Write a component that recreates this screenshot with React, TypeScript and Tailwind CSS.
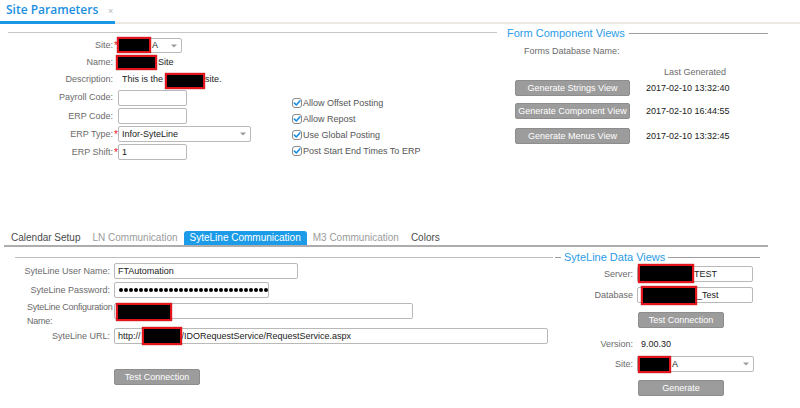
import React from 'react';

const Redact: React.FC<{ w: number; h?: number }> = ({ w, h = 16 }) => (
  <span
    className="inline-block shrink-0 bg-black border-2 border-[#e3141b] shadow-[0_0_1px_#900]"
    style={{ width: w, height: h }}
  />
);

const Arrow = () => (
  <svg width="6" height="4" viewBox="0 0 6 4" className="ml-auto mr-[4px] shrink-0">
    <path d="M0 0.5 L6 0.5 L3 3.5 Z" fill="#9a9a9a" />
  </svg>
);

const Check = () => (
  <svg width="10" height="10" viewBox="0 0 10 10" className="shrink-0">
    <rect x="0.5" y="0.5" width="9" height="9" rx="2.5" fill="#fff" stroke="#8a8a8a" />
    <path d="M2.4 5.1 L4.3 7 L7.8 2.9" fill="none" stroke="#1c8fe3" strokeWidth="1.6" strokeLinecap="round" strokeLinejoin="round" />
  </svg>
);

const Input: React.FC<{ w: number; h?: number; clip?: boolean; children?: React.ReactNode }> = ({ w, h = 16, clip = true, children }) => (
  <div
    className={`flex items-center shrink-0 border border-[#b9b9b9] rounded-[2px] bg-white text-[9px] text-[#222] pl-[3px] ${clip ? 'overflow-hidden' : ''}`}
    style={{ width: w, height: h }}
  >
    {children}
  </div>
);

const GreyButton: React.FC<{ w: number; children: React.ReactNode }> = ({ w, children }) => (
  <div
    className="h-[16px] flex items-center justify-center shrink-0 bg-[#9c9c9c] border border-[#8d8d8d] rounded-[2px] text-white text-[9px]"
    style={{ width: w }}
  >
    {children}
  </div>
);

const TopLabel: React.FC<{ req?: boolean; children: React.ReactNode }> = ({ req, children }) => (
  <div className="w-[110px] shrink-0 flex justify-end items-center text-[9px] text-[#6b6b6b]">
    <span>{children}</span>
    <span className="w-[5px] self-start text-[#e3141b] text-[10px] leading-none mt-[1px] pl-[1px]">{req ? '*' : ''}</span>
  </div>
);

const SlLabel: React.FC<{ children: React.ReactNode }> = ({ children }) => (
  <div className="ml-[8px] w-[87px] mr-[4px] shrink-0 text-right whitespace-nowrap text-[#6b6b6b]">{children}</div>
);

const checks = ['Allow Offset Posting', 'Allow Repost', 'Use Global Posting', 'Post Start End Times To ERP'];

const views = [
  { label: 'Generate Strings View', date: '2017-02-10 13:32:40', mt: 'mt-[2px]' },
  { label: 'Generate Component View', date: '2017-02-10 16:44:55', mt: 'mt-[7px]' },
  { label: 'Generate Menus View', date: '2017-02-10 13:32:45', mt: 'mt-[9px]' },
];

const tabs = [
  { name: 'Calendar Setup', state: 'on' },
  { name: 'LN Communication', state: 'off' },
  { name: 'SyteLine Communication', state: 'active' },
  { name: 'M3 Communication', state: 'off' },
  { name: 'Colors', state: 'on' },
];

export default function App() {
  return (
    <div className="w-[800px] h-[408px] bg-white overflow-hidden [font-family:'Liberation_Sans',Arial,sans-serif] leading-none">
      {/* page tab header */}
      <div className="h-[24px] flex items-start border-b-2 border-[#ece8e4]">
        <div className="w-[115px] h-[24px] -mb-[2px] border-b-[3px] border-[#1a98e6] flex items-center pl-[6px] pb-[2px]">
          <span className="[font-family:'Open_Sans',sans-serif] font-semibold text-[12px] text-[#1a8fe0]">Site Parameters</span>
        </div>
        <span className="text-[9px] text-[#b5b5b5] mt-[7px] -ml-[7px]">×</span>
      </div>

      {/* top section */}
      <div className="flex h-[206px]">
        <div className="ml-[8px] mt-[8px] w-[489px] self-start border-t border-[#c6c6c6] flex">
          <div className="w-[250px] pt-[4px]">
            <div className="h-[17px] flex items-center">
              <TopLabel req>Site:</TopLabel>
              <div className="h-[15px] w-[64px] flex items-center border border-[#b9b9b9] rounded-[2px] text-[9px] text-[#222]">
                <span className="-ml-[2px] -mt-[1px] flex"><Redact w={34} h={16} /></span>
                <span className="ml-px">A</span>
                <Arrow />
              </div>
            </div>
            <div className="h-[17px] flex items-center">
              <TopLabel>Name:</TopLabel>
              <span className="-ml-[2px] flex"><Redact w={41} h={15} /></span>
              <span className="text-[9px] text-[#222] ml-px">Site</span>
            </div>
            <div className="h-[17px] flex items-center">
              <TopLabel>Description:</TopLabel>
              <span className="text-[9px] text-[#222] ml-[4px]">This is the</span>
              <span className="ml-[2px] mt-[3px] flex"><Redact w={40} h={16} /></span>
              <span className="text-[9px] text-[#222]">site.</span>
            </div>
            <div className="h-[19px] flex items-center">
              <TopLabel>Payroll Code:</TopLabel>
              <Input w={69} />
            </div>
            <div className="h-[18px] flex items-center">
              <TopLabel>ERP Code:</TopLabel>
              <Input w={69} />
            </div>
            <div className="h-[18px] flex items-center">
              <TopLabel req>ERP Type:</TopLabel>
              <Input w={133}>
                <span>Infor-SyteLine</span>
                <Arrow />
              </Input>
            </div>
            <div className="h-[18px] flex items-center">
              <TopLabel req>ERP Shift:</TopLabel>
              <Input w={69}>1</Input>
            </div>
          </div>

          <div className="ml-[34px] mt-[62px]">
            {checks.map((c) => (
              <div key={c} className="h-[16px] flex items-center gap-[1px] text-[9px] text-[#555]">
                <Check />
                <span>{c}</span>
              </div>
            ))}
          </div>
        </div>

        <div className="ml-[10px] mt-[2px] w-[261px] self-start">
          <div className="h-[14px] flex items-center">
            <span className="text-[11px] text-[#2b9ce6]">Form Component Views</span>
            <div className="flex-1 ml-[4px] border-t border-[#9e9e9e]" />
          </div>
          <div className="mt-[5px] pl-[17px] h-[12px] flex items-center text-[9px] text-[#6b6b6b]">Forms Database Name:</div>
          <div className="mt-[9px] pl-[157px] h-[12px] flex items-center text-[9px] text-[#6b6b6b]">Last Generated</div>
          {views.map((v) => (
            <div key={v.label} className={`${v.mt} flex items-center`}>
              <div className="ml-[8px]">
                <GreyButton w={115}>{v.label}</GreyButton>
              </div>
              <span className="ml-[16px] text-[9px] text-[#222]">{v.date}</span>
            </div>
          ))}
        </div>
      </div>

      {/* sub tabs */}
      <div className="ml-[4px] w-[764px] h-[17px] border-b-2 border-[#adadad] flex items-end pl-px">
        {tabs.map((t) => (
          <div
            key={t.name}
            className={`h-[14px] px-[6px] flex items-center text-[10px] ${
              t.state === 'active'
                ? 'bg-[#1b9be8] text-white rounded-t-[3px]'
                : t.state === 'off'
                ? 'text-[#9b9b9b]'
                : 'text-[#4a4a4a]'
            }`}
          >
            {t.name}
          </div>
        ))}
      </div>

      {/* SyteLine communication */}
      <div className="flex">
        <div className="ml-[15px] mt-[10px] w-[538px] self-start border-t border-[#bdbdbd] text-[9px]">
          <div className="mt-[5px] flex items-center">
            <SlLabel>SyteLine User Name:</SlLabel>
            <Input w={184}>FTAutomation</Input>
          </div>
          <div className="mt-[3px] flex items-center">
            <SlLabel>SyteLine Password:</SlLabel>
            <Input w={155}>
              <div className="flex gap-[1px] pl-px">
                {Array.from({ length: 30 }).map((_, i) => (
                  <span key={i} className="w-[4px] h-[4px] rounded-full bg-black" />
                ))}
              </div>
            </Input>
          </div>
          <div className="mt-[5px] flex items-start">
            <div className="ml-[12px] w-[83px] mr-[4px] shrink-0 -mt-[3px] leading-[14px] whitespace-nowrap tracking-[-0.25px] text-[#6b6b6b]">
              SyteLine Configuration
              <br />
              Name:
            </div>
            <Input w={299} clip={false}>
              <span className="-ml-[2px] mt-[2px] flex"><Redact w={56} h={18} /></span>
            </Input>
          </div>
          <div className="flex items-center">
            <SlLabel>SyteLine URL:</SlLabel>
            <Input w={434} clip={false}>
              <span>http://</span>
              <span className="ml-[1px] flex"><Redact w={40} h={18} /></span>
              <span>/IDORequestService/RequestService.aspx</span>
            </Input>
          </div>
          <div className="mt-[25px] ml-[99px]">
            <GreyButton w={86}>Test Connection</GreyButton>
          </div>
        </div>

        <div className="ml-[2px] mt-[3px] w-[205px] self-start text-[9px]">
          <div className="h-[14px] flex items-center">
            <div className="w-[6px] border-t border-[#9e9e9e]" />
            <span className="px-[3px] text-[11px] text-[#2b9ce6]">SyteLine Data Views</span>
            <div className="flex-1 border-t border-[#9e9e9e]" />
          </div>
          <div className="mt-[2px] flex items-center">
            <div className="w-[78px] mr-[4px] text-right text-[#6b6b6b]">Server:</div>
            <Input w={116} clip={false}>
              <span className="-ml-[3px] mt-[-2px] flex"><Redact w={56} h={19} /></span>
              <span>TEST</span>
            </Input>
          </div>
          <div className="mt-[5px] flex items-center">
            <div className="w-[78px] mr-[4px] text-right text-[#6b6b6b]">Database</div>
            <Input w={116} clip={false}>
              <span className="ml-[0px] mt-[1px] flex"><Redact w={56} h={19} /></span>
              <span>_Test</span>
            </Input>
          </div>
          <div className="mt-[9px] ml-[83px]">
            <GreyButton w={86}>Test Connection</GreyButton>
          </div>
          <div className="mt-[8px] h-[16px] flex items-center">
            <div className="w-[78px] mr-[4px] text-right text-[#6b6b6b]">Version:</div>
            <span className="pl-[4px] text-[#222]">9.00.30</span>
          </div>
          <div className="mt-[4px] flex items-center">
            <div className="w-[78px] mr-[4px] text-right text-[#6b6b6b]">Site:</div>
            <Input w={117} clip={false}>
              <span className="-ml-[3px] flex"><Redact w={33} h={17} /></span>
              <span className="ml-[1px]">A</span>
              <Arrow />
            </Input>
          </div>
          <div className="mt-[8px] ml-[83px]">
            <GreyButton w={86}>Generate</GreyButton>
          </div>
        </div>
      </div>
    </div>
  );
}
